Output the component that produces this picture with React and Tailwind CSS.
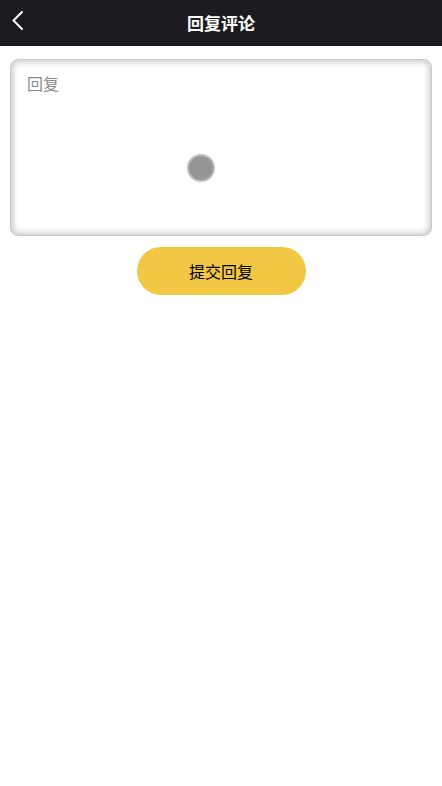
import { useState } from "react";

export default function App() {
  const [text, setText] = useState("");

  return (
    <div className="min-h-screen bg-white font-['Noto_Sans_CJK_SC',sans-serif]">
      {/* 顶部栏 */}
      <header className="h-[46px] bg-[#1c1b1f] flex items-center relative">
        <button className="absolute left-[10px] top-[9px] text-white">
          <svg width="18" height="24" viewBox="0 0 18 24" fill="none">
            <path d="M12 3 L3.5 11.5 L12 20" stroke="white" strokeWidth="2" strokeLinecap="round" strokeLinejoin="round" />
          </svg>
        </button>
        <h1 className="flex-1 text-center text-white font-bold text-[17px]">回复评论</h1>
      </header>

      {/* 内容 */}
      <main className="px-[10px] pt-[13px] flex flex-col items-center">
        <div className="relative w-full">
          <textarea
            value={text}
            onChange={(e) => setText(e.target.value)}
            placeholder="回复"
            autoFocus
            className="block w-full h-[177px] resize-none rounded-[8px] border border-[#c9c9c9] px-[16px] py-[12px] text-[16px] leading-[22px] text-[#333] placeholder:text-[#8a8a8a] outline-none shadow-[inset_0_0_6px_2px_rgba(0,0,0,0.22)]"
          />
          <div className="absolute left-[177px] top-[95px] w-[28px] h-[28px] rounded-full bg-[#959595] border-2 border-[#bdbdbd]" />
        </div>
        <button className="mt-[11px] w-[169px] h-[48px] rounded-full bg-[#f2c744] text-[16px] text-black">
          提交回复
        </button>
      </main>
    </div>
  );
}
